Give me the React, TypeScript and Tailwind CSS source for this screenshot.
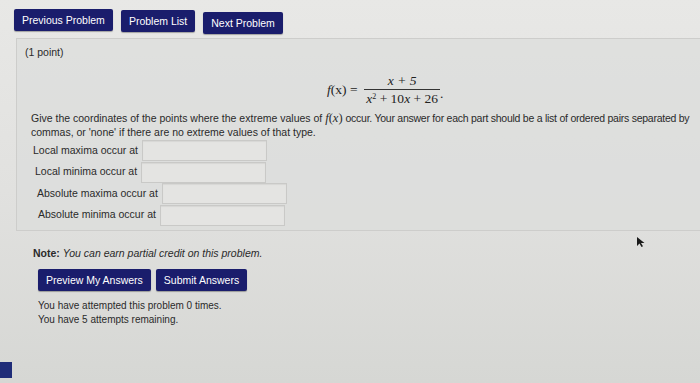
const navBtn =
  "h-[22px] whitespace-nowrap rounded-[2px] bg-[#1a1d6c] px-[8px] text-[10.5px] leading-[22px] text-white shadow-[0_1px_1px_rgba(0,0,0,0.3)]";

const fields = [
  { label: "Local maxima occur at", ml: "ml-[2px]" },
  { label: "Local minima occur at", ml: "ml-[4px]" },
  { label: "Absolute maxima occur at", ml: "ml-[6px]" },
  { label: "Absolute minima occur at", ml: "ml-[7px]" },
];

function Cursor() {
  return (
    <svg width="10" height="12" viewBox="0 0 10 12" className="absolute left-[636px] top-[236px]">
      <path d="M1 1 L1 10 L3.5 7.5 L5.5 11 L7 10.3 L5 7 L8.5 7 Z" fill="#1a1a1a" />
    </svg>
  );
}

export default function App() {
  return (
    <div
      className="relative h-[383px] w-[700px] overflow-hidden bg-gradient-to-b from-[#e8e8e6] via-[#e1e1df] to-[#d6d7d4] text-[#2a2a2a]"
      style={{ fontFamily: '"Liberation Sans", Arial, sans-serif' }}
    >
      <div className="flex items-start gap-[8px] pl-[14px] pt-[9px]">
        <button className={navBtn}>Previous Problem</button>
        <button className={`${navBtn} mt-[1px]`}>Problem List</button>
        <button className={`${navBtn} mt-[3px]`}>Next Problem</button>
      </div>

      <div className="ml-[16px] mt-[4px] h-[193px] border-t border-l border-b border-[#cdcdcb] bg-[#dcdddb]/70 pl-[8px] pt-[6px] text-[10.5px]">
        <div className="leading-[14px]">(1 point)</div>

        <div
          className="mt-[14px] flex items-center pl-[302px] text-[13.5px] text-[#222]"
          style={{ fontFamily: '"Liberation Serif", "Times New Roman", serif' }}
        >
          <span className="italic">f</span>
          <span>(x) =&nbsp;&nbsp;</span>
          <span className="inline-flex flex-col items-center leading-[16px]">
            <span className="px-[2px] italic">x + 5</span>
            <span className="border-t border-[#333] px-[2px] pt-[1px]">
              <span className="italic">x</span>
              <sup className="text-[8px]">2</sup>
              {" + 10"}
              <span className="italic">x</span>
              {" + 26"}
            </span>
          </span>
          <span className="mt-[8px]">.</span>
        </div>

        <div className="mt-[4px] whitespace-nowrap pl-[6px] leading-[14px]">
          Give the coordinates of the points where the extreme values of{" "}
          <span className="text-[12.5px]" style={{ fontFamily: '"Liberation Serif", serif' }}>
            <i>f</i>(<i>x</i>)
          </span>{" "}
          <span className="tracking-[-0.25px]">
            occur. Your answer for each part should be a list of ordered pairs separated by
          </span>
          <br />
          commas, or 'none' if there are no extreme values of that type.
        </div>

        <div className="mt-[1px] flex flex-col">
          {fields.map((f) => (
            <div key={f.label} className={`flex h-[21.5px] items-center ${f.ml}`}>
              <span className="pl-[6px] pr-[4px]">{f.label}</span>
              <span className="h-[21px] w-[125px] border border-[#c9c9c7] bg-[#e4e4e2] shadow-[inset_0_1px_1px_rgba(0,0,0,0.06)]" />
            </div>
          ))}
        </div>
      </div>

      <div className="pl-[33px] pt-[15px] text-[10.5px]">
        <div>
          <b>Note:</b> <i>You can earn partial credit on this problem.</i>
        </div>
        <div className="mt-[7px] ml-[5px] flex gap-[5px]">
          <button className={navBtn}>Preview My Answers</button>
          <button className={navBtn}>Submit Answers</button>
        </div>
        <div className="mt-[8px] ml-[5px] text-[10px] leading-[14px]">
          You have attempted this problem 0 times.
          <br />
          You have 5 attempts remaining.
        </div>
      </div>

      <div className="absolute left-0 top-[362px] h-[16px] w-[12px] bg-[#1f2c78]" />
      <Cursor />
    </div>
  );
}
